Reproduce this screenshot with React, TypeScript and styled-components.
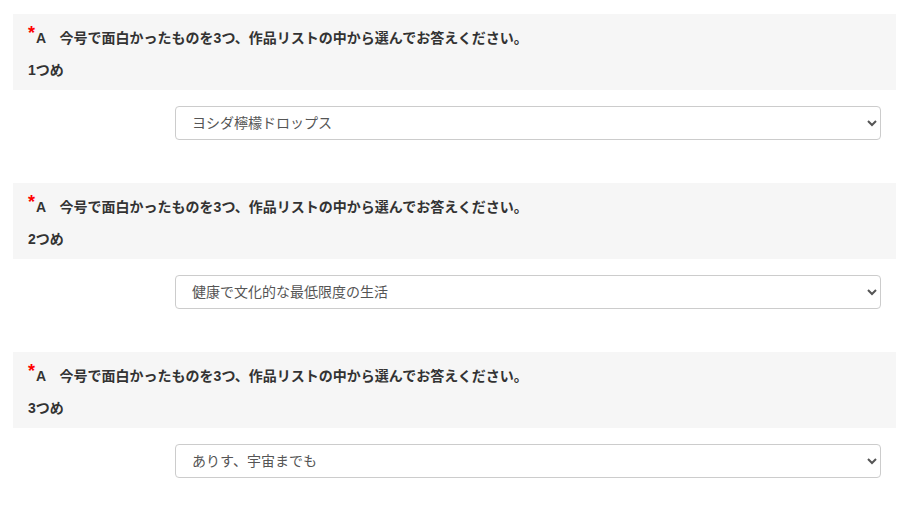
import { createGlobalStyle } from "styled-components";
import styled from "styled-components";

const GlobalStyle = createGlobalStyle`
  body {
    margin: 0;
    background: #fff;
    font-family: "Liberation Sans", "Noto Sans CJK JP", sans-serif;
    color: #333;
  }
`;

const questions = [
  { no: "1つめ", answer: "ヨシダ檸檬ドロップス" },
  { no: "2つめ", answer: "健康で文化的な最低限度の生活" },
  { no: "3つめ", answer: "ありす、宇宙までも" },
];

const App = () => {
  return (
    <Wrapper>
      <GlobalStyle />
      {questions.map((q) => (
        <Block key={q.no}>
          <Header>
            <Title>
              <Required>*</Required>A　今号で面白かったものを3つ、作品リストの中から選んでお答えください。
            </Title>
            <Sub>{q.no}</Sub>
          </Header>
          <SelectRow>
            <Select defaultValue={q.answer}>
              <option value="">選択してください</option>
              <option value={q.answer}>{q.answer}</option>
            </Select>
          </SelectRow>
        </Block>
      ))}
    </Wrapper>
  );
};

const Wrapper = styled.section`
  padding: 14px 12px 0 13px;
`;

const Block = styled.div`
  margin-bottom: 43.5px;
`;

const Header = styled.div`
  background: #f6f6f6;
  padding: 12px 15px 7.5px;
`;

const Title = styled.div`
  font-size: 14px;
  font-weight: bold;
  line-height: 24px;
  height: 24px;
`;

const Required = styled.span`
  color: #f00;
  font-size: 18px;
  line-height: 0;
  position: relative;
  top: -4px;
  margin-right: 1px;
`;

const Sub = styled.div`
  margin-top: 8px;
  font-size: 14px;
  font-weight: bold;
  line-height: 24px;
  height: 24px;
`;

const SelectRow = styled.div`
  margin: 16px 15px 0 162px;
`;

const Select = styled.select`
  display: block;
  width: 100%;
  height: 34px;
  padding: 0 10px 0 12px;
  border: 1px solid #ccc;
  border-radius: 4px;
  background: #fff;
  font-family: "Liberation Sans", "Noto Sans CJK JP", sans-serif;
  font-size: 14px;
  color: #555;
`;

export default App;
